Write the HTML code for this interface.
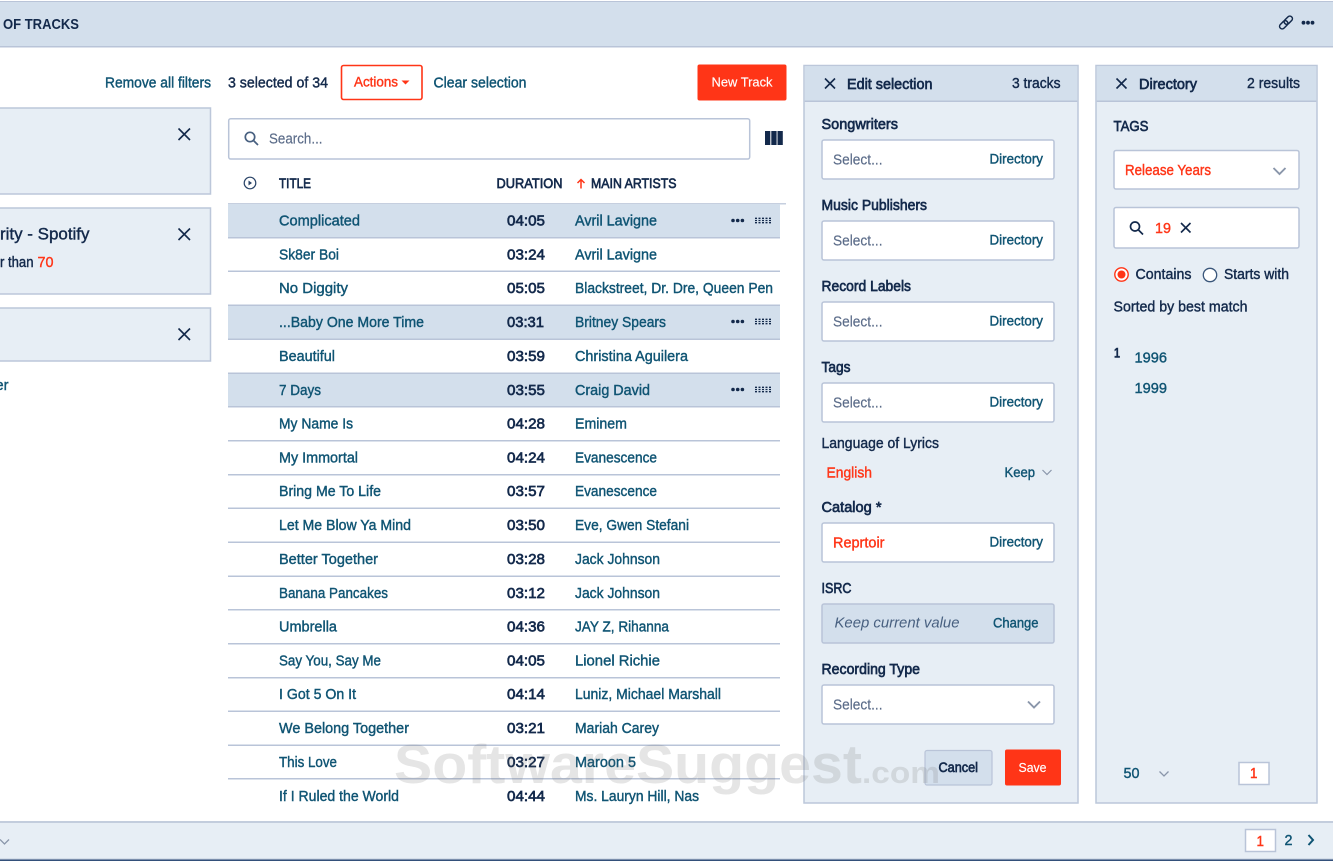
<!DOCTYPE html>
<html><head><meta charset="utf-8"><style>
html,body{margin:0;padding:0;background:#fff;width:1333px;height:861px;overflow:hidden}
svg{display:block;filter:blur(.3px)}
text{font-family:"Liberation Sans",sans-serif;font-size:14.5px;stroke-width:.4px;paint-order:stroke}
.d{fill:#13294b;stroke:#13294b}
.l{fill:#0f5473;stroke:#0f5473}
.r{fill:#ff3517;stroke:#ff3517}
.g{fill:#5a6b88;stroke:#5a6b88}
g.g text{stroke-width:.15px}
.w{fill:#fff;stroke:#fff}
g.b text,text.b{stroke-width:.65px}
.x{fill:none;stroke:#13294b;stroke-width:1.6}
.c{fill:none;stroke:#8a96aa;stroke-width:1.6}
.in{fill:#fff;stroke:#b9c4d8;stroke-width:1.5}
.p{fill:#e7eef5;stroke:#bcc7da;stroke-width:1.5}
.ln{fill:#b9c4d8}
.s{fill:#d3dfec}
</style></head><body>
<svg width="1333" height="861" viewBox="0 0 1333 861" xmlns="http://www.w3.org/2000/svg">
<rect x="0" y="1" width="1333" height="1.5" fill="#b9c4d8"/>
<rect x="0" y="2" width="1333" height="44" class="s"/>
<rect x="0" y="46" width="1333" height="1.5" class="ln"/>
<text x="3" y="29" class="d" textLength="76" lengthAdjust="spacingAndGlyphs" style="font-weight:bold;font-size:15px;stroke-width:0">OF TRACKS</text>
<g transform="translate(1286,22.500) rotate(-45)" fill="none" stroke="#13294b" stroke-width="1.500"><rect x="-8" y="-2.600" width="9.500" height="5.200" rx="2.600"/><rect x="-1.500" y="-2.600" width="9.500" height="5.200" rx="2.600"/></g>
<g fill="#13294b"><circle cx="1303.500" cy="22.700" r="1.900"/><circle cx="1308" cy="22.700" r="1.900"/><circle cx="1312.500" cy="22.700" r="1.900"/></g>

<text x="105" y="87.500" class="l" textLength="106" lengthAdjust="spacingAndGlyphs">Remove all filters</text>
<text x="228" y="87.500" class="d" textLength="100" lengthAdjust="spacingAndGlyphs">3 selected of 34</text>
<rect x="341.500" y="65.500" width="80.500" height="34" rx="2" fill="#fff" stroke="#ff3517" stroke-width="1.600"/>
<text x="354" y="86.500" class="r" textLength="44" lengthAdjust="spacingAndGlyphs" style="font-size:13.5px">Actions</text>
<path d="M401.500 80.500h8l-4 4z" fill="#ff3517"/>
<text x="433.500" y="87.500" class="l" textLength="93" lengthAdjust="spacingAndGlyphs">Clear selection</text>
<rect x="697.500" y="64.500" width="89" height="36" rx="2" fill="#ff3517"/>
<text x="711.500" y="86.500" class="w" textLength="61" lengthAdjust="spacingAndGlyphs" style="font-size:13px;stroke-width:.15px">New Track</text>

<rect x="-10" y="108" width="220.500" height="86" class="p"/>
<rect x="-10" y="208" width="220.500" height="86" class="p"/>
<rect x="-10" y="308" width="220.500" height="53" class="p"/>
<path class="x" d="M178.500 128.500l11.500 11.500M190 128.500l-11.500 11.500M178.500 228.500l11.500 11.500M190 228.500l-11.500 11.500M178.500 328.500l11.500 11.500M190 328.500l-11.500 11.500"/>
<text x="0" y="239.500" class="d" textLength="89.500" lengthAdjust="spacingAndGlyphs" style="font-size:17px">rity - Spotify</text>
<text x="0" y="267" class="d" textLength="33.500" lengthAdjust="spacingAndGlyphs">r than</text>
<text x="37.500" y="267" class="r" textLength="16" lengthAdjust="spacingAndGlyphs">70</text>
<text x="-4.500" y="390" class="l" textLength="13" lengthAdjust="spacingAndGlyphs">er</text>

<rect x="228.700" y="118.700" width="521" height="40.300" rx="2" class="in"/>
<g fill="none" stroke="#486080" stroke-width="1.700"><circle cx="250" cy="137" r="4.700"/><path d="M253.500 140.500l4.500 4.500"/></g>
<g class="g"><text x="269" y="143.500" textLength="53.500" lengthAdjust="spacingAndGlyphs">Search...</text></g>
<g fill="#13294b"><rect x="765" y="131" width="5.300" height="14"/><rect x="771.300" y="131" width="5.300" height="14"/><rect x="777.500" y="131" width="5.300" height="14"/></g>
<circle cx="250" cy="183" r="5.800" fill="none" stroke="#2a4468" stroke-width="1.200"/><path d="M248.500 180.500l3.500 2.500-3.500 2.500z" fill="#2a4468"/>
<text x="279" y="188" class="d b" textLength="32" lengthAdjust="spacingAndGlyphs" style="font-size:13.5px">TITLE</text>
<text x="496.500" y="188" class="d b" textLength="66" lengthAdjust="spacingAndGlyphs" style="font-size:13.5px">DURATION</text>
<path d="M581 188.500v-9M577.500 183l3.500-3.500 3.500 3.500" fill="none" stroke="#ff3517" stroke-width="1.500"/>
<text x="591" y="188" class="d b" textLength="85.500" lengthAdjust="spacingAndGlyphs" style="font-size:13.5px">MAIN ARTISTS</text>
<rect x="228" y="203" width="558" height="1.500" fill="#c6cfdf"/>

<rect x="228" y="204" width="552" height="33" class="s"/>
<rect x="228" y="306" width="552" height="33" class="s"/>
<rect x="228" y="374" width="552" height="33" class="s"/>
<g class="ln">
<rect x="228" y="237" width="552" height="1.500"/><rect x="228" y="270.500" width="552" height="1.500"/><rect x="228" y="304.500" width="552" height="1.500"/><rect x="228" y="338.500" width="552" height="1.500"/><rect x="228" y="372.500" width="552" height="1.500"/><rect x="228" y="406" width="552" height="1.500"/><rect x="228" y="440" width="552" height="1.500"/><rect x="228" y="474" width="552" height="1.500"/><rect x="228" y="507.500" width="552" height="1.500"/><rect x="228" y="541.500" width="552" height="1.500"/><rect x="228" y="575.500" width="552" height="1.500"/><rect x="228" y="609" width="552" height="1.500"/><rect x="228" y="643" width="552" height="1.500"/><rect x="228" y="677" width="552" height="1.500"/><rect x="228" y="710.500" width="552" height="1.500"/><rect x="228" y="744.500" width="552" height="1.500"/><rect x="228" y="778" width="552" height="1.500"/>
</g>

<g class="l">
<text x="279" y="225.500" textLength="81" lengthAdjust="spacingAndGlyphs">Complicated</text>
<text x="279" y="259.500" textLength="60" lengthAdjust="spacingAndGlyphs">Sk8er Boi</text>
<text x="279" y="293" textLength="69" lengthAdjust="spacingAndGlyphs">No Diggity</text>
<text x="279" y="327" textLength="145" lengthAdjust="spacingAndGlyphs">...Baby One More Time</text>
<text x="279" y="361" textLength="56" lengthAdjust="spacingAndGlyphs">Beautiful</text>
<text x="279" y="395" textLength="42" lengthAdjust="spacingAndGlyphs">7 Days</text>
<text x="279" y="428.500" textLength="74" lengthAdjust="spacingAndGlyphs">My Name Is</text>
<text x="279" y="462.500" textLength="79" lengthAdjust="spacingAndGlyphs">My Immortal</text>
<text x="279" y="496" textLength="102" lengthAdjust="spacingAndGlyphs">Bring Me To Life</text>
<text x="279" y="530" textLength="132" lengthAdjust="spacingAndGlyphs">Let Me Blow Ya Mind</text>
<text x="279" y="564" textLength="99" lengthAdjust="spacingAndGlyphs">Better Together</text>
<text x="279" y="598" textLength="109" lengthAdjust="spacingAndGlyphs">Banana Pancakes</text>
<text x="279" y="631.500" textLength="58" lengthAdjust="spacingAndGlyphs">Umbrella</text>
<text x="279" y="665.500" textLength="102" lengthAdjust="spacingAndGlyphs">Say You, Say Me</text>
<text x="279" y="699" textLength="77" lengthAdjust="spacingAndGlyphs">I Got 5 On It</text>
<text x="279" y="733" textLength="130" lengthAdjust="spacingAndGlyphs">We Belong Together</text>
<text x="279" y="767" textLength="58" lengthAdjust="spacingAndGlyphs">This Love</text>
<text x="279" y="801" textLength="120" lengthAdjust="spacingAndGlyphs">If I Ruled the World</text>

<text x="575" y="225.500" textLength="82" lengthAdjust="spacingAndGlyphs">Avril Lavigne</text>
<text x="575" y="259.500" textLength="82" lengthAdjust="spacingAndGlyphs">Avril Lavigne</text>
<text x="575" y="293" textLength="198" lengthAdjust="spacingAndGlyphs">Blackstreet, Dr. Dre, Queen Pen</text>
<text x="575" y="327" textLength="91" lengthAdjust="spacingAndGlyphs">Britney Spears</text>
<text x="575" y="361" textLength="113" lengthAdjust="spacingAndGlyphs">Christina Aguilera</text>
<text x="575" y="395" textLength="75" lengthAdjust="spacingAndGlyphs">Craig David</text>
<text x="575" y="428.500" textLength="52" lengthAdjust="spacingAndGlyphs">Eminem</text>
<text x="575" y="462.500" textLength="82" lengthAdjust="spacingAndGlyphs">Evanescence</text>
<text x="575" y="496" textLength="82" lengthAdjust="spacingAndGlyphs">Evanescence</text>
<text x="575" y="530" textLength="114" lengthAdjust="spacingAndGlyphs">Eve, Gwen Stefani</text>
<text x="575" y="564" textLength="85" lengthAdjust="spacingAndGlyphs">Jack Johnson</text>
<text x="575" y="598" textLength="85" lengthAdjust="spacingAndGlyphs">Jack Johnson</text>
<text x="575" y="631.500" textLength="94" lengthAdjust="spacingAndGlyphs">JAY Z, Rihanna</text>
<text x="575" y="665.500" textLength="85" lengthAdjust="spacingAndGlyphs">Lionel Richie</text>
<text x="575" y="699" textLength="146" lengthAdjust="spacingAndGlyphs">Luniz, Michael Marshall</text>
<text x="575" y="733" textLength="84" lengthAdjust="spacingAndGlyphs">Mariah Carey</text>
<text x="575" y="767" textLength="61" lengthAdjust="spacingAndGlyphs">Maroon 5</text>
<text x="575" y="801" textLength="124" lengthAdjust="spacingAndGlyphs">Ms. Lauryn Hill, Nas</text>
</g>
<g class="d b">
<text x="507" y="225.500" textLength="38" lengthAdjust="spacingAndGlyphs">04:05</text>
<text x="507" y="259.500" textLength="38" lengthAdjust="spacingAndGlyphs">03:24</text>
<text x="507" y="293" textLength="38" lengthAdjust="spacingAndGlyphs">05:05</text>
<text x="507" y="327" textLength="37" lengthAdjust="spacingAndGlyphs">03:31</text>
<text x="507" y="361" textLength="38" lengthAdjust="spacingAndGlyphs">03:59</text>
<text x="507" y="395" textLength="38" lengthAdjust="spacingAndGlyphs">03:55</text>
<text x="507" y="428.500" textLength="38" lengthAdjust="spacingAndGlyphs">04:28</text>
<text x="507" y="462.500" textLength="38" lengthAdjust="spacingAndGlyphs">04:24</text>
<text x="507" y="496" textLength="38" lengthAdjust="spacingAndGlyphs">03:57</text>
<text x="507" y="530" textLength="38" lengthAdjust="spacingAndGlyphs">03:50</text>
<text x="507" y="564" textLength="38" lengthAdjust="spacingAndGlyphs">03:28</text>
<text x="507" y="598" textLength="38" lengthAdjust="spacingAndGlyphs">03:12</text>
<text x="507" y="631.500" textLength="38" lengthAdjust="spacingAndGlyphs">04:36</text>
<text x="507" y="665.500" textLength="38" lengthAdjust="spacingAndGlyphs">04:05</text>
<text x="507" y="699" textLength="38" lengthAdjust="spacingAndGlyphs">04:14</text>
<text x="507" y="733" textLength="38" lengthAdjust="spacingAndGlyphs">03:21</text>
<text x="507" y="767" textLength="38" lengthAdjust="spacingAndGlyphs">03:27</text>
<text x="507" y="801" textLength="38" lengthAdjust="spacingAndGlyphs">04:44</text>
</g>
<g fill="#13294b">
<g transform="translate(0,220.500)"><circle cx="733" r="1.800"/><circle cx="737.700" r="1.800"/><circle cx="742.400" r="1.800"/><path d="M755 -2.200h17M755 0h17M755 2.200h17" stroke="#13294b" stroke-width="1.300" stroke-dasharray="2 1.500" fill="none"/></g>
<g transform="translate(0,321.500)"><circle cx="733" r="1.800"/><circle cx="737.700" r="1.800"/><circle cx="742.400" r="1.800"/><path d="M755 -2.200h17M755 0h17M755 2.200h17" stroke="#13294b" stroke-width="1.300" stroke-dasharray="2 1.500" fill="none"/></g>
<g transform="translate(0,389.500)"><circle cx="733" r="1.800"/><circle cx="737.700" r="1.800"/><circle cx="742.400" r="1.800"/><path d="M755 -2.200h17M755 0h17M755 2.200h17" stroke="#13294b" stroke-width="1.300" stroke-dasharray="2 1.500" fill="none"/></g>
</g>

<!-- Edit panel -->
<rect x="804" y="65.500" width="274" height="737.500" class="p"/>
<rect x="804.700" y="66.200" width="272.600" height="34.800" class="s"/>
<rect x="804.700" y="100.500" width="272.600" height="1.500" class="ln"/>
<path class="x" d="M825 78.500l10 10M835 78.500l-10 10"/>
<text x="847" y="89" class="d b" textLength="85.500" lengthAdjust="spacingAndGlyphs">Edit selection</text>
<text x="1012" y="88" class="d" textLength="48.500" lengthAdjust="spacingAndGlyphs">3 tracks</text>

<g class="d b">
<text x="821.500" y="129" textLength="76.500" lengthAdjust="spacingAndGlyphs">Songwriters</text>
<text x="821.500" y="210" textLength="105.500" lengthAdjust="spacingAndGlyphs">Music Publishers</text>
<text x="821.500" y="291" textLength="89.500" lengthAdjust="spacingAndGlyphs">Record Labels</text>
<text x="821.500" y="372" textLength="29" lengthAdjust="spacingAndGlyphs">Tags</text>
<text x="821.500" y="512" textLength="60" lengthAdjust="spacingAndGlyphs">Catalog *</text>
<text x="821.500" y="593" textLength="30" lengthAdjust="spacingAndGlyphs">ISRC</text>
<text x="821.500" y="674" textLength="98.500" lengthAdjust="spacingAndGlyphs">Recording Type</text>
</g>
<text x="821.500" y="448" class="d" textLength="117.500" lengthAdjust="spacingAndGlyphs">Language of Lyrics</text>
<rect x="822" y="140" width="232" height="39" rx="2" class="in"/>
<rect x="822" y="221" width="232" height="39" rx="2" class="in"/>
<rect x="822" y="302" width="232" height="39" rx="2" class="in"/>
<rect x="822" y="383" width="232" height="39" rx="2" class="in"/>
<rect x="822" y="523" width="232" height="39" rx="2" class="in"/>
<rect x="822" y="604" width="232" height="39" rx="2" fill="#d3dfec" stroke="#b9c4d8" stroke-width="1.500"/>
<rect x="822" y="685" width="232" height="39" rx="2" class="in"/>
<g class="g">
<text x="833" y="164.500" textLength="49.500" lengthAdjust="spacingAndGlyphs">Select...</text>
<text x="833" y="245.500" textLength="49.500" lengthAdjust="spacingAndGlyphs">Select...</text>
<text x="833" y="326.500" textLength="49.500" lengthAdjust="spacingAndGlyphs">Select...</text>
<text x="833" y="407.500" textLength="49.500" lengthAdjust="spacingAndGlyphs">Select...</text>
<text x="833" y="709.500" textLength="49.500" lengthAdjust="spacingAndGlyphs">Select...</text>
</g>
<g class="l">
<text x="989.500" y="163.500" textLength="53.500" lengthAdjust="spacingAndGlyphs" style="font-size:13.500px">Directory</text>
<text x="989.500" y="244.500" textLength="53.500" lengthAdjust="spacingAndGlyphs" style="font-size:13.500px">Directory</text>
<text x="989.500" y="325.500" textLength="53.500" lengthAdjust="spacingAndGlyphs" style="font-size:13.500px">Directory</text>
<text x="989.500" y="406.500" textLength="53.500" lengthAdjust="spacingAndGlyphs" style="font-size:13.500px">Directory</text>
<text x="989.500" y="546.500" textLength="53.500" lengthAdjust="spacingAndGlyphs" style="font-size:13.500px">Directory</text>
<text x="993" y="627.500" textLength="45.500" lengthAdjust="spacingAndGlyphs" style="font-size:13.500px">Change</text>
<text x="1004.500" y="477" textLength="30.500" lengthAdjust="spacingAndGlyphs" style="font-size:13.500px">Keep</text>
</g>
<text x="826.500" y="477.500" class="r" textLength="45.500" lengthAdjust="spacingAndGlyphs">English</text>
<path class="c" style="stroke-width:1.200" d="M1042.500 470l4.500 4.500 4.500-4.500"/>
<text x="833" y="547.500" class="r" textLength="51.500" lengthAdjust="spacingAndGlyphs">Reprtoir</text>
<text x="834.500" y="627.500" textLength="125" lengthAdjust="spacingAndGlyphs" style="font-style:italic;fill:#486080;stroke:none">Keep current value</text>
<path class="c" style="stroke-width:1.900" d="M1028 701.500l6 6 6-6"/>
<rect x="925" y="750.500" width="67" height="34.500" rx="2" fill="#d3dfec" stroke="#b9c4d8" stroke-width="1.200"/>
<text x="938.500" y="772" class="d b" textLength="39.500" lengthAdjust="spacingAndGlyphs" style="font-size:13.5px">Cancel</text>
<rect x="1005" y="749.500" width="56" height="36" rx="2" fill="#ff3517"/>
<text x="1018.500" y="772" class="w" textLength="28" lengthAdjust="spacingAndGlyphs" style="font-size:13px;stroke-width:.15px">Save</text>

<!-- Directory panel -->
<rect x="1096" y="65.500" width="221" height="737.500" class="p"/>
<rect x="1096.700" y="66.200" width="219.600" height="34.800" class="s"/>
<rect x="1096.700" y="100.500" width="219.600" height="1.500" class="ln"/>
<path class="x" d="M1116.500 78.500l10 10M1126.500 78.500l-10 10"/>
<text x="1139" y="89" class="d b" textLength="58" lengthAdjust="spacingAndGlyphs">Directory</text>
<text x="1247" y="88" class="d" textLength="53" lengthAdjust="spacingAndGlyphs">2 results</text>
<text x="1113.500" y="131" class="d b" textLength="35" lengthAdjust="spacingAndGlyphs">TAGS</text>
<rect x="1114" y="150.500" width="185" height="38.500" rx="2" class="in"/>
<text x="1125" y="175" class="r" textLength="86" lengthAdjust="spacingAndGlyphs">Release Years</text>
<path class="c" style="stroke-width:1.900" d="M1273.500 168l6 6 6-6"/>
<rect x="1114" y="207.500" width="185" height="40.500" rx="2" class="in"/>
<g fill="none" stroke="#13294b" stroke-width="1.700"><circle cx="1135" cy="226.500" r="4.500"/><path d="M1138.500 230l4.500 4.500"/></g>
<text x="1155" y="233" class="r" textLength="16" lengthAdjust="spacingAndGlyphs">19</text>
<path class="x" d="M1181 223l9.500 9.500M1190.500 223l-9.500 9.500"/>
<circle cx="1121.500" cy="274.500" r="6.700" fill="#fff" stroke="#ff3517" stroke-width="1.400"/><circle cx="1121.500" cy="274.500" r="4" fill="#ff3517"/>
<text x="1135.500" y="279" class="d" textLength="56" lengthAdjust="spacingAndGlyphs">Contains</text>
<circle cx="1210" cy="275" r="6.700" fill="#fff" stroke="#3a567a" stroke-width="1.300"/>
<text x="1224" y="279" class="d" textLength="65" lengthAdjust="spacingAndGlyphs">Starts with</text>
<text x="1113.500" y="311.500" class="d" textLength="134" lengthAdjust="spacingAndGlyphs">Sorted by best match</text>
<text x="1114" y="357.500" class="d" textLength="6" lengthAdjust="spacingAndGlyphs" style="font-weight:bold;font-size:14px">1</text>
<text x="1134.500" y="362.500" class="l" textLength="32.500" lengthAdjust="spacingAndGlyphs">1996</text>
<text x="1134.500" y="393" class="l" textLength="32.500" lengthAdjust="spacingAndGlyphs">1999</text>
<text x="1123.500" y="778" class="l" textLength="16" lengthAdjust="spacingAndGlyphs">50</text>
<path class="c" style="stroke-width:1.300" d="M1159.500 771.500l4.500 4.500 4.500-4.500"/>
<rect x="1239" y="762.500" width="30" height="22" fill="#fff" stroke="#b9c4d8" stroke-width="1.500"/>
<text x="1250" y="778" class="r" textLength="7.500" lengthAdjust="spacingAndGlyphs">1</text>

<!-- Footer -->
<rect x="0" y="823" width="1333" height="36" fill="#e7eef5"/>
<rect x="0" y="821" width="1333" height="2" fill="#c3cddd"/>
<rect x="0" y="858.500" width="1333" height="1" fill="#c3cddd"/>
<rect x="0" y="859.500" width="1333" height="1.500" fill="#33507a"/>
<path class="c" style="stroke-width:1.300" d="M0 839.500l4.500 4.500 4.500-4.500"/>
<rect x="1245.500" y="829.500" width="30" height="22" fill="#fff" stroke="#b9c4d8" stroke-width="1.500"/>
<text x="1256.500" y="846" class="r" textLength="7.500" lengthAdjust="spacingAndGlyphs">1</text>
<text x="1284.500" y="845" class="l" textLength="8" lengthAdjust="spacingAndGlyphs">2</text>
<path d="M1308.500 835l4.500 5-4.500 5" fill="none" stroke="#0f5473" stroke-width="2"/>

<!-- Watermark -->
<text x="394" y="783" textLength="468" lengthAdjust="spacingAndGlyphs" style="font-weight:bold;font-size:55px;fill:rgba(110,110,110,.18);stroke:none">SoftwareSuggest</text>
<text x="862" y="783" textLength="78" lengthAdjust="spacingAndGlyphs" style="font-weight:bold;font-size:31px;fill:rgba(110,110,110,.18);stroke:none">.com</text>
</svg>
</body></html>
